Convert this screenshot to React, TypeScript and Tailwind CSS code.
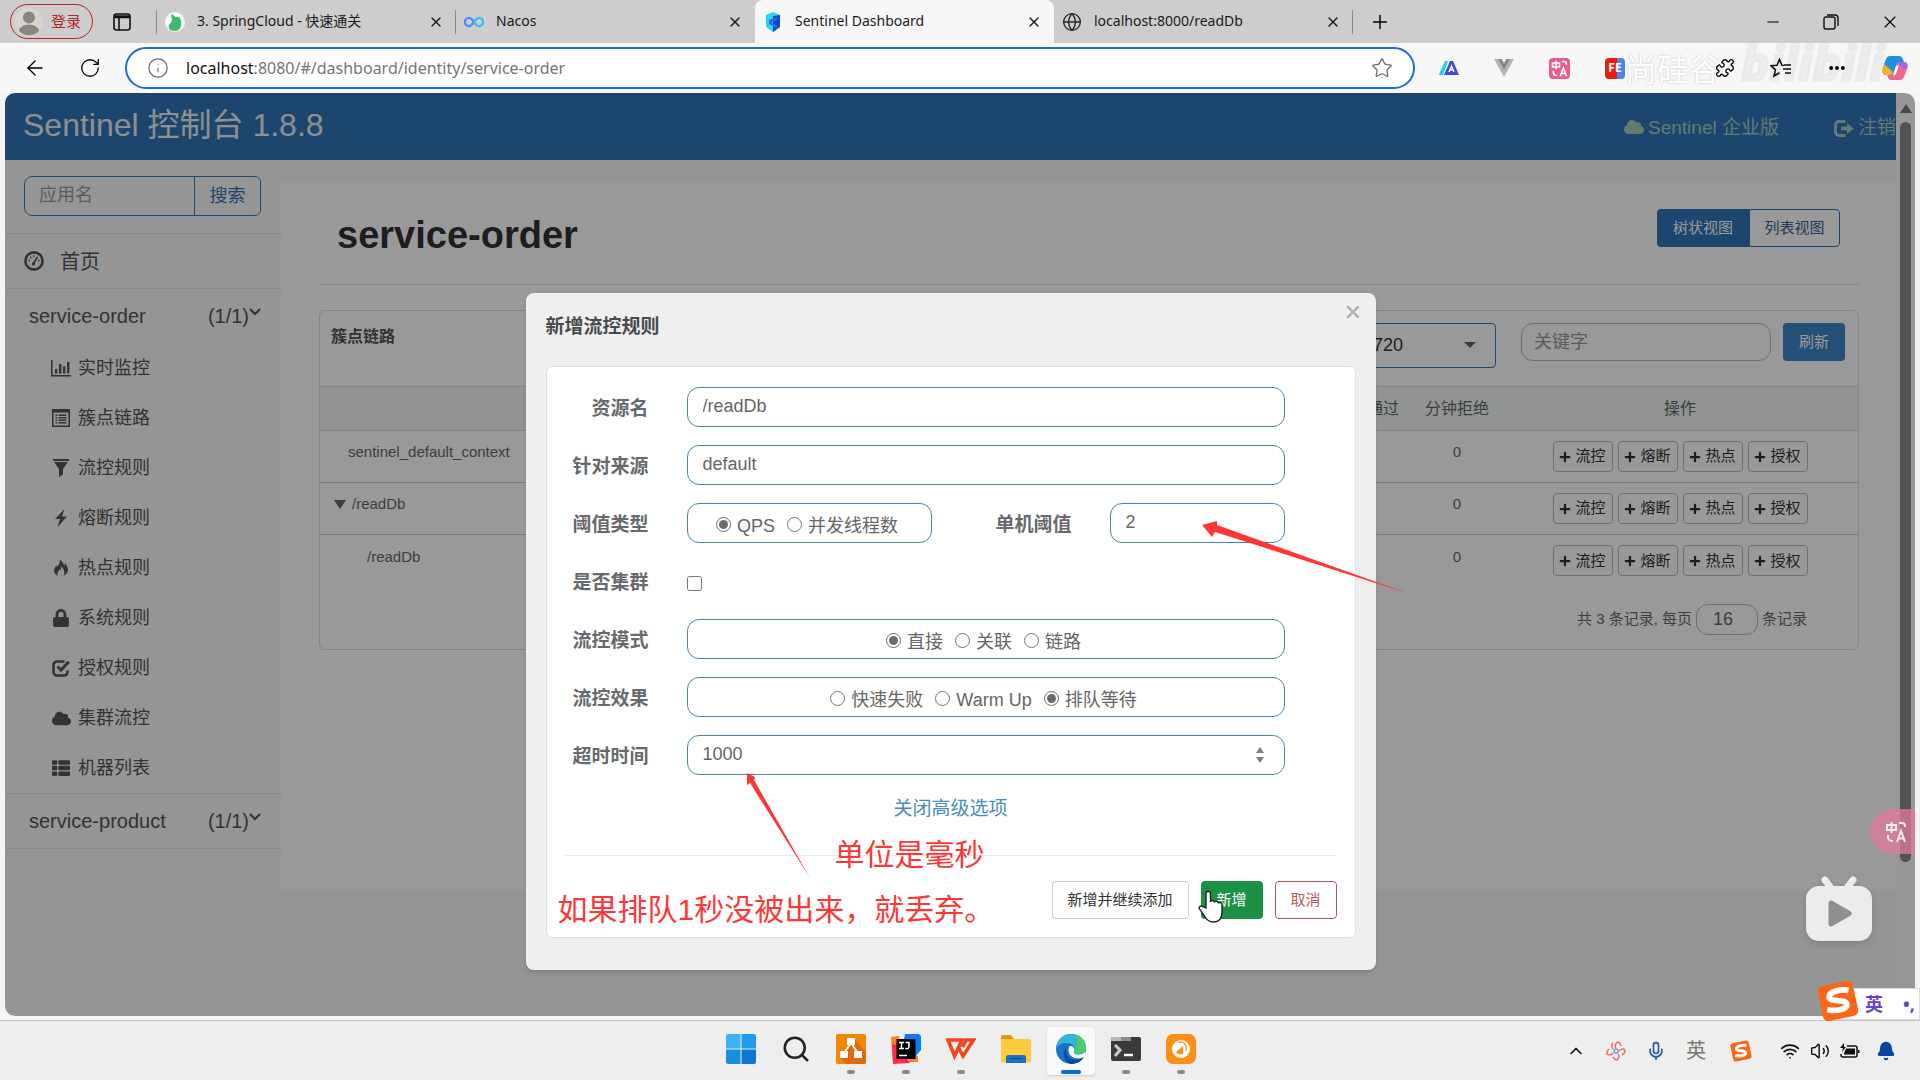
import type { ReactNode } from 'react';
import {
  ArrowLeft,
  Bell,
  ChevronUp,
  Ellipsis,
  Globe,
  Info,
  Mic,
  Minus,
  Plus,
  Puzzle,
  RotateCw,
  Search,
  Star,
  Volume2,
  Wifi,
  X,
} from 'lucide-react';
import { FaCloud, FaLock, FaPlus, FaThList } from 'react-icons/fa';
import { ImFire } from 'react-icons/im';

const UI_FONT = 'font-["Noto_Sans","Noto_Sans_CJK_SC",sans-serif]';
const PAGE_FONT = 'font-["Liberation_Sans","Noto_Sans_CJK_SC",sans-serif]';

/* ---------- icons ---------- */

function StatsIcon() {
  return (
    <svg viewBox="0 0 20 17" className="w-5 h-[17px]" fill="currentColor">
      <path d="M0 0h1.5v15H20v1.5H0zM4 9h2.4v4.5H4zM8 4h2.4v9.500H8zM12 6.500h2.400v7H12zM16 2h2.400v11.500H16z" />
    </svg>
  );
}

function ListAltIcon() {
  return (
    <svg viewBox="0 0 18 18" className="w-[18px] h-[18px]" fill="currentColor" fillRule="evenodd">
      <path d="M0 0h18v18H0zM1.500 3.500v13h15v-13z" />
      <path d="M3.500 5.500h1.800v1.500H3.500zM6.500 5.500h8v1.500h-8zM3.500 8h1.800v1.500H3.500zM6.500 8h8v1.500h-8zM3.500 10.500h1.800V12H3.500zM6.500 10.500h8V12h-8zM3.500 13h1.800v1.500H3.500zM6.500 13h8v1.500h-8z" />
    </svg>
  );
}

function FilterIcon() {
  return (
    <svg viewBox="0 0 16 18" className="w-4 h-[18px]" fill="currentColor">
      <path d="M0 0h16v2H0zM1 3h14l-5 7v5.500L6 18v-8z" />
    </svg>
  );
}

function FlashIcon() {
  return (
    <svg viewBox="0 0 12 18" className="w-3 h-[18px]" fill="currentColor">
      <path d="M9.500 0L0 10h5L2.500 18 12 7.500H7z" />
    </svg>
  );
}

function LockIcon() {
  return <FaLock className="w-[18px] h-[18px]" />;
}

function CheckIcon() {
  return (
    <svg viewBox="0 0 18 17" className="w-[18px] h-[17px]" fill="none" stroke="currentColor">
      <path d="M12.500 1.500H5A3.500 3.500 0 001.500 5v7A3.500 3.500 0 005 15.500h7A3.500 3.500 0 0015.500 12v-1.500" strokeWidth="2.600" />
      <path d="M5.500 6.500l3.500 3.500L16.800 1.800" strokeWidth="3" />
    </svg>
  );
}

function MeterIcon() {
  return (
    <svg viewBox="0 0 20 20" className="w-5 h-5" fill="none" stroke="currentColor">
      <circle cx="10" cy="10" r="8.600" strokeWidth="2.600" />
      <path d="M9.500 12.500l4-6.500" strokeWidth="1.600" />
      <circle cx="9.500" cy="13" r="1.200" fill="currentColor" />
      <path d="M4.500 9.500h1.500M6 6.500h1.500M9 5h1.500M14 9.500h1.500" strokeWidth="1.500" />
    </svg>
  );
}

function LogoutIcon() {
  return (
    <svg viewBox="0 0 20 17" className="w-5 h-[17px]" fill="none" stroke="currentColor">
      <path d="M11.500 1.500H5A3.500 3.500 0 001.500 5v7A3.500 3.500 0 005 15.500h6.500" strokeWidth="3" />
      <path d="M7 6.500h6V3l7 5.500-7 5.500v-3.500H7z" fill="currentColor" stroke="none" />
    </svg>
  );
}

function TranslateGlyph({ className }: { className: string }) {
  return (
    <svg viewBox="0 0 22 22" className={className} fill="none" stroke="currentColor" strokeWidth="2">
      <path d="M2 4h9v5H2zM6.500 1v11M14 2h3a3 3 0 013 3v1M3 14v2a4 4 0 004 4h1" />
      <path d="M12 21l4-11 4 11M13.500 17.500h5" />
    </svg>
  );
}

function SogouIcon({ className }: { className: string }) {
  return (
    <svg viewBox="0 0 40 40" className={className}>
      <rect x="3" y="3" width="34" height="34" rx="5" fill="#fb6617" transform="rotate(-12 20 20)" />
      <path
        d="M31 11c-7-2-19-1-19 4.500 0 5 16 3 16 8.500 0 5-11 6-19 3"
        fill="none"
        stroke="#fff"
        strokeWidth="5.500"
        transform="rotate(-6 20 20)"
      />
    </svg>
  );
}

/* ---------- browser chrome ---------- */

function TabItem({ icon, title, active = false, divider = false }: {
  icon: ReactNode;
  title: string;
  active?: boolean;
  divider?: boolean;
}) {
  return (
    <div
      className={`relative flex items-center w-[299px] h-[43px] pl-2 pr-3 ${active ? 'bg-[#f7f7f7] rounded-t-lg' : ''}`}
    >
      <span className="w-5 h-5 flex items-center justify-center shrink-0">{icon}</span>
      <span className="flex-1 pl-3 pb-[2px] text-[14px] leading-5 text-[#1a1a1a] truncate">{title}</span>
      <button aria-label="关闭标签页" className="text-[#1a1a1a]">
        <X className="w-4 h-4" strokeWidth={2} />
      </button>
      {divider && <span className="absolute right-0 top-[10px] w-px h-6 bg-[#8c8c8c]" />}
    </div>
  );
}

function TabBar() {
  return (
    <div className="flex items-center h-[43px] bg-[#cdcdcd] shrink-0">
      <button className="flex items-center gap-2 w-[83px] h-[35px] ml-[10px] pl-1 rounded-full border border-[#b3262b] text-[#b3262b] text-[15px]">
        <svg viewBox="0 0 28 28" className="w-7 h-7">
          <circle cx="14" cy="14" r="14" fill="#d8d4d0" />
          <circle cx="14" cy="9.500" r="6" fill="#8b8682" />
          <path d="M4 23a10 6.500 0 0120 0 14 14 0 01-20 0z" fill="#8b8682" />
        </svg>
        登录
      </button>
      <button aria-label="标签操作" className="w-[18px] h-[18px] ml-5 mr-[25px]">
        <svg viewBox="0 0 18 18" fill="none" stroke="#111" strokeWidth="1.600">
          <rect x="1" y="1" width="16" height="16" rx="2.500" />
          <path d="M1 3h16M1 4.500h16M6 5v12" />
        </svg>
      </button>
      <span className="w-px h-6 bg-[#8c8c8c]" />
      <TabItem
        divider
        title="3. SpringCloud - 快速通关"
        icon={
          <svg viewBox="0 0 20 20" className="w-5 h-5">
            <circle cx="10" cy="10" r="10" fill="#f3fbf6" />
            <path d="M7 2c2 1 2 3 5 3s4 2 4 5c1 5-2 9-6 9-5 0-7-3-6-6 1-2 3-3 3-6-1-2-1-4 0-5z" fill="#3dba6f" />
          </svg>
        }
      />
      <TabItem
        title="Nacos"
        icon={
          <svg viewBox="0 0 22 12" className="w-[22px] h-3" fill="none" strokeWidth="2.400">
            <path d="M11 6C8.500 2.500 7 1.500 5.500 1.500a4.500 4.500 0 000 9C7 10.500 8.500 9.500 11 6" stroke="#4f8df5" />
            <path d="M11 6c2.500-3.500 4-4.500 5.500-4.500a4.500 4.500 0 010 9C15 10.500 13.500 9.500 11 6" stroke="#2cc4f0" />
          </svg>
        }
      />
      <TabItem
        active
        title="Sentinel Dashboard"
        icon={
          <svg viewBox="0 0 16 20" className="w-4 h-5">
            <path d="M1 3l7-3 7 3v12l-7 5-7-5z" fill="#2bd5ee" />
            <path d="M8 4l7-1v12l-7 5z" fill="#1546c4" />
            <path d="M4 8l8-3v3L6 11l6 2v3l-8-4z" fill="#1e6fe0" />
          </svg>
        }
      />
      <TabItem divider title="localhost:8000/readDb" icon={<Globe className="w-5 h-5 text-[#222]" strokeWidth={1.600} />} />
      <button aria-label="新建标签页" className="ml-4">
        <Plus className="w-[22px] h-[22px]" strokeWidth={1.600} />
      </button>
      <div className="flex items-center gap-10 ml-auto pr-5">
        <button aria-label="最小化"><Minus className="w-[18px] h-[18px]" strokeWidth={1.400} /></button>
        <button aria-label="还原">
          <svg viewBox="0 0 18 18" className="w-[18px] h-[18px]" fill="none" stroke="#111" strokeWidth="1.400">
            <rect x="2" y="4" width="11" height="12" rx="2" />
            <path d="M5 2h8a3 3 0 013 3v8" />
          </svg>
        </button>
        <button aria-label="关闭"><X className="w-5 h-5" strokeWidth={1.300} /></button>
      </div>
    </div>
  );
}

function AddressBar() {
  return (
    <div className="relative flex items-center h-[50px] bg-[#f7f7f7] shrink-0">
      <button aria-label="后退" className="ml-[23px]"><ArrowLeft className="w-6 h-6" strokeWidth={1.400} /></button>
      <button aria-label="刷新" className="ml-8 mr-6"><RotateCw className="w-[22px] h-[22px]" strokeWidth={1.400} /></button>
      <div className="flex items-center flex-1 h-[42px] px-5 rounded-full border-2 border-[#1f6bd6] bg-white">
        <Info className="w-[22px] h-[22px] text-[#6b6b6b]" strokeWidth={1.300} />
        <span className="flex-1 pl-[17px] text-[16px] text-[#767676]">
          <span className="text-[#111]">localhost</span>:8080/#/dashboard/identity/service-order
        </span>
        <Star className="w-[22px] h-[22px] text-[#6b6b6b]" strokeWidth={1.400} />
      </div>

      <div className="absolute right-9 -top-2 flex items-center gap-5 text-white pointer-events-none select-none">
        <span className="pt-3 text-[32px] leading-10 [text-shadow:0_0_2px_#bbb]">尚硅谷</span>
        <span className="text-[48px] leading-[56px] font-bold italic text-[#ececec] [text-shadow:0_0_2px_#ccc]">bilibili</span>
      </div>

      <div className="relative flex items-center justify-between w-[505px] pl-6 pr-3">
        <svg viewBox="0 0 20 14" className="w-5 h-[14px]">
          <path d="M6 0h3l-5 14H1a1 1 0 01-1-1z" fill="#27d0e8" />
          <path d="M11 0h3l6 14H5z" fill="#3a49e0" />
          <path d="M10 11l2.500-6 2.500 6M11 9h3" stroke="#fff" fill="none" strokeWidth="1.500" />
        </svg>
        <svg viewBox="0 0 20 18" className="w-5 h-[18px]">
          <path d="M0 0h6l4 7 4-7h6L10 18z" fill="#b5b5b5" />
          <path d="M4 0h3.500L10 4.500 12.500 0H16l-6 10.500z" fill="#858585" />
        </svg>
        <span className="w-[21px] h-[21px] rounded-sm bg-[#e85d8b] text-white flex items-center justify-center">
          <TranslateGlyph className="w-[17px] h-[17px]" />
        </span>
        <span className="w-5 h-[21px] rounded-sm bg-linear-to-r from-[#ee1c0c] from-60% to-[#4b83ef] to-60% text-white text-[12px] font-bold flex items-center justify-center">
          FE
        </span>
        <span className="w-5" />
        <Puzzle className="w-5 h-5" strokeWidth={1.600} />
        <svg viewBox="0 0 22 20" className="w-[22px] h-5" fill="none" stroke="#111" strokeWidth="1.600">
          <path d="M14 7.500l-2-.3L9.500 1.500 7 7.200l-6 .6 4.500 4L4 18l5.500-3.200M14 7h7M13 11h8M15 15h6" />
        </svg>
        <Ellipsis className="w-5 h-5" strokeWidth={2.600} />
        <svg viewBox="0 0 26 26" className="w-[26px] h-[26px]">
          <path d="M8 1h9c3 0 4 3 5 6h-4c-2 0-3 1-4 4l-2 6c-1 2-2 3-4 3H4C0 20 0 16 1 12l3-8c1-2 2-3 4-3z" fill="#1f8fe0" />
          <path d="M1 12l1-3 9 8c-1 2-2 3-4 3H4c-4 0-4-4-3-8z" fill="#f4b526" />
          <path d="M18 7h4c4 0 4 4 3 7l-3 8c-1 2-2 3-4 3H9c-2 0-3-2-4-5h3c2 0 3-1 4-3l2-6c1-3 2-4 4-4z" fill="#f0688f" />
          <path d="M18 7h4c4 0 4 4 3 7h-3l-4-3-3 2h-1c1-4 2-6 4-6z" fill="#a566e8" />
          <path d="M14 11l3-1-3 9-3 2z" fill="#fff" />
        </svg>
      </div>
    </div>
  );
}

/* ---------- sentinel page ---------- */

const menuItems: { label: string; icon: ReactNode }[] = [
  { label: '实时监控', icon: <StatsIcon /> },
  { label: '簇点链路', icon: <ListAltIcon /> },
  { label: '流控规则', icon: <FilterIcon /> },
  { label: '熔断规则', icon: <FlashIcon /> },
  { label: '热点规则', icon: <ImFire className="w-4 h-[18px]" /> },
  { label: '系统规则', icon: <LockIcon /> },
  { label: '授权规则', icon: <CheckIcon /> },
  { label: '集群流控', icon: <FaCloud className="w-[19px] h-[17px]" /> },
  { label: '机器列表', icon: <FaThList className="w-[18px] h-[18px]" /> },
];

const rows = [
  { name: 'sentinel_default_context', pad: 'pl-7', open: false },
  { name: '/readDb', pad: 'pl-[14px]', open: true },
  { name: '/readDb', pad: 'pl-[47px]', open: false },
];

const actions = ['流控', '熔断', '热点', '授权'];

function AppHeading({ name }: { name: string }) {
  return (
    <a href="#" className="flex items-center h-[54px] pl-6 pr-5 text-[20px] text-[#555]">
      <span className="flex-1">{name}</span>
      <span>(1/1)</span>
      <svg viewBox="0 0 12 8" className="w-3 h-2 mb-2" fill="none" stroke="currentColor" strokeWidth="2">
        <path d="M1 1l5 5 5-5" />
      </svg>
    </a>
  );
}

function Sidebar() {
  return (
    <nav className="w-[276px] shrink-0 bg-[#f8f8f8] h-[730px]">
      <form className="flex h-[74px] pt-4 pl-[19px] pr-5 border-b border-[#e7e7e7]">
        <input
          aria-label="应用名"
          placeholder="应用名"
          className="w-[171px] h-10 pl-[14px] pb-[2px] text-[18px] border border-[#3a7cb8] rounded-l-lg placeholder:text-[#999]"
        />
        <button type="button" className="flex-1 h-10 -ml-px border border-[#3a7cb8] rounded-r-md text-[18px] text-[#3377b5]">
          搜索
        </button>
      </form>
      <a href="#" className="flex items-center gap-4 h-[55px] pl-[19px] border-b border-[#e7e7e7] text-[20px] text-[#555]">
        <MeterIcon />
        <span className="pt-[2px]">首页</span>
      </a>
      <AppHeading name="service-order" />
      <ul className="border-b border-[#e7e7e7]">
        {menuItems.map((m) => (
          <li key={m.label}>
            <a href="#" className="flex items-center h-[50px] pl-[46px] gap-[7px] text-[18px] text-[#555]">
              <span className="w-5 flex justify-center">{m.icon}</span>
              {m.label}
            </a>
          </li>
        ))}
      </ul>
      <div className="border-b border-[#e7e7e7]">
        <AppHeading name="service-product" />
      </div>
    </nav>
  );
}

function LinkCard() {
  return (
    <section className="mt-[25px] border border-[#ddd] rounded-md text-[#676a6c]">
      <div className="flex items-start h-[75px] pl-[11px] pr-[13px] pt-3">
        <h2 className="flex-1 pt-[2px] text-[16px] font-bold text-[#555]">簇点链路</h2>
        <div className="relative mr-[25px]">
          <select
            aria-label="机器"
            className="appearance-none w-[300px] h-[45px] pr-[92px] text-right text-[18px] text-[#333] border border-[#3a7cb8] rounded"
          >
            <option>8720</option>
          </select>
          <span className="absolute right-5 top-[19px] border-x-6 border-x-transparent border-t-6 border-t-[#666]" />
        </div>
        <input
          aria-label="关键字"
          placeholder="关键字"
          className="w-[250px] h-[38px] mr-3 pl-3 text-[18px] border border-[#bbb] rounded-xl placeholder:text-[#999]"
        />
        <button className="w-[62px] h-[38px] rounded bg-[#3c84c6] text-white text-[15px]">刷新</button>
      </div>
      <table className="w-full table-fixed border-collapse text-[15px]">
        <thead>
          <tr className="h-[44px] border-y border-[#dcdfe0] bg-[#f2f7f6] text-[16px]">
            <th />
            {['通过QPS', '拒绝QPS', '并发数', '平均RT', '分钟通过', '分钟拒绝'].map((h) => (
              <th key={h} className="w-[90px] font-normal">{h}</th>
            ))}
            <th className="w-[356px] font-normal">操作</th>
          </tr>
        </thead>
        <tbody>
          {rows.map((r, i) => (
            <tr key={i} className="h-[52px] border-t border-[#d0d0d0]">
              <td className={r.pad}>
                <span className="flex items-center gap-[6px] pb-2">
                  {r.open && <span className="border-x-6 border-x-transparent border-t-9 border-t-[#666]" />}
                  {r.name}
                </span>
              </td>
              {[0, 0, 0, 0, 0, 0].map((n, c) => (
                <td key={c} className="pb-2 text-center">{n}</td>
              ))}
              <td>
                <div className="flex justify-center gap-[5px]">
                  {actions.map((a) => (
                    <button key={a} className="flex items-center justify-center gap-1 w-[60px] h-[31px] border border-[#bbb] rounded text-[15px] text-[#333]">
                      <FaPlus className="w-3 h-3" />
                      {a}
                    </button>
                  ))}
                </div>
              </td>
            </tr>
          ))}
        </tbody>
      </table>
      <div className="flex justify-end items-center gap-1 h-[62px] pr-[51px] pt-1 text-[15px]">
        <label htmlFor="pageSize">共 3 条记录, 每页</label>
        <input id="pageSize" defaultValue="16" className="w-[62px] h-[31px] pl-4 text-[18px] border border-[#bbb] rounded-xl" />
        <span>条记录</span>
      </div>
    </section>
  );
}

function Page() {
  return (
    <div className="flex-1 min-w-0 bg-[#f8f8f8]">
      <header className="flex items-center h-[67px] pl-[18px] bg-[#2f75b6]">
        <h1 className="flex-1 pb-1 text-[32px] text-[#eee]">Sentinel 控制台 1.8.8</h1>
        <a href="#" className="flex items-center gap-1 pt-1 text-[19px] text-[#a5cbbd]">
          <FaCloud className="w-5 h-5 mb-1" />
          Sentinel 企业版
        </a>
        <a href="#" className="flex items-center gap-1 ml-[55px] pt-1 text-[19px] text-[#a5cbbd]">
          <LogoutIcon />
          注销
        </a>
      </header>
      <div className="flex items-start">
        <Sidebar />
        <main className="flex-1 min-w-0 h-[708px] mt-[22px] pl-[38px] pr-[37px] bg-white">
          <div className="flex items-start justify-between h-[103px] pt-[27px] pl-[18px] pr-[19px] border-b border-[#ddd]">
            <h2 className="text-[38px] leading-[52px] font-bold text-[#333]">service-order</h2>
            <div className="flex text-[15px]">
              <button className="w-[92px] h-[38px] rounded-l bg-[#2f75b6] text-white">树状视图</button>
              <button className="w-[91px] h-[38px] rounded-r border border-[#2f75b6] text-[#3a5f96]">列表视图</button>
            </div>
          </div>
          <LinkCard />
        </main>
      </div>
    </div>
  );
}

/* ---------- dialog ---------- */

const boxClass = 'h-10 border border-[#4a83a8] rounded-xl text-[18px] text-[#666] bg-white';

function Field({ label, htmlFor, children }: { label: string; htmlFor?: string; children: ReactNode }) {
  return (
    <div className="flex items-center h-10">
      <label htmlFor={htmlFor} className="w-[84px] mr-[38px] pt-1 text-right text-[19px] font-bold text-[#676a6c]">
        {label}
      </label>
      {children}
    </div>
  );
}

function RadioGroup({ name, options, checked, className }: {
  name: string;
  options: string[];
  checked: string;
  className: string;
}) {
  return (
    <div role="radiogroup" aria-label={name} className={`${boxClass} ${className} flex items-center justify-center gap-3 pr-1`}>
      {options.map((o) => (
        <label key={o} className="flex items-center gap-[6px] pt-[6px]">
          <input type="radio" name={name} defaultChecked={o === checked} className="w-[15px] h-[15px] mb-1 accent-[#6b6b6b]" />
          {o}
        </label>
      ))}
    </div>
  );
}

function RuleDialog() {
  return (
    <div role="dialog" aria-label="新增流控规则" className="relative w-[850px] px-5 pb-8 bg-[#efefef] rounded-lg shadow-md">
      <button aria-label="关闭" className="absolute right-[13px] top-[9px] text-[#b5b5b5]">
        <X className="w-5 h-5" strokeWidth={3.200} />
      </button>
      <h3 className="h-[73px] pt-5 text-[19px] leading-7 font-bold text-[#484b4e]">新增流控规则</h3>

      <div className="pt-5 px-[18px] pb-[18px] bg-white border border-[#e0e0e0] rounded-md">
        <form className="flex flex-col gap-[18px]">
          <Field label="资源名" htmlFor="resource">
            <input id="resource" defaultValue="/readDb" className={`${boxClass} w-[598px] px-[15px] pb-[2px]`} />
          </Field>
          <Field label="针对来源" htmlFor="origin">
            <input id="origin" defaultValue="default" className={`${boxClass} w-[598px] px-[15px] pb-[2px]`} />
          </Field>
          <Field label="阈值类型">
            <RadioGroup name="阈值类型" options={['QPS', '并发线程数']} checked="QPS" className="w-[245px]" />
            <label htmlFor="count" className="ml-16 mr-[38px] pt-1 text-[19px] font-bold text-[#676a6c]">单机阈值</label>
            <input id="count" defaultValue="2" className={`${boxClass} w-[175px] px-[15px] pb-[2px]`} />
          </Field>
          <Field label="是否集群" htmlFor="cluster">
            <input id="cluster" type="checkbox" className="w-[15px] h-[15px] mt-1" />
          </Field>
          <Field label="流控模式">
            <RadioGroup name="流控模式" options={['直接', '关联', '链路']} checked="直接" className="w-[598px]" />
          </Field>
          <Field label="流控效果">
            <RadioGroup name="流控效果" options={['快速失败', 'Warm Up', '排队等待']} checked="排队等待" className="w-[598px]" />
          </Field>
          <Field label="超时时间" htmlFor="timeout">
            <div className="relative">
              <input id="timeout" defaultValue="1000" className={`${boxClass} w-[598px] px-[15px] pb-[2px]`} />
              <svg viewBox="0 0 8 16" className="absolute right-[21px] top-3 w-2 h-4" fill="#7d7d7d">
                <path d="M4 0l4 6H0zM4 16l4-6H0z" />
              </svg>
            </div>
          </Field>
        </form>
        <div className="h-[81px] pt-5 text-center border-b border-[#ebebeb]">
          <a href="#" className="text-[19px] leading-7 text-[#4a8bc0]">关闭高级选项</a>
        </div>
        <div className="flex justify-end gap-3 pt-[25px] text-[15px]">
          <button className="w-[137px] h-[38px] border border-[#ccc] rounded text-[#333]">新增并继续添加</button>
          <button className="w-[62px] h-[38px] rounded bg-[#1c9144] text-white">新增</button>
          <button className="w-[62px] h-[38px] border border-[#b5545a] rounded text-[#c0565c]">取消</button>
        </div>
      </div>

      {/* hand-drawn notes over the form */}
      <p className="absolute left-[309px] top-[540px] text-[30px] leading-[44px] text-[#ff3636] whitespace-nowrap">单位是毫秒</p>
      <p className="absolute left-8 top-[595px] text-[30px] leading-[44px] text-[#ff3636] whitespace-nowrap">
        如果排队1秒没被出来，就丢弃。
      </p>
      <svg viewBox="0 0 900 677" className="absolute left-0 top-0 w-[900px] h-[677px] pointer-events-none" fill="#ff3636">
        <path d="M676 232l15-4v4l193 69-195-62-3 5z" />
        <path d="M221 480l8 4-1 3 56 98-60-95-3 2z" />
      </svg>
      <svg viewBox="0 0 26 34" className="absolute left-[672px] top-[597px] w-[26px] h-[34px]" fill="#fff" stroke="#222" strokeWidth="1.400">
        <path d="M8 18V3.500a2.200 2.200 0 014.500 0V12c0-2 4-2 4 .5 0-2 4-1.500 4 1 0-1.500 3.500-1.500 3.500 1V22c0 7-3 10-8.500 10-5 0-7-2-9-6l-5-7c-1-2 1-4 3-2.500z" />
      </svg>
    </div>
  );
}

function Scrollbar() {
  return (
    <div className="flex flex-col items-center w-[19px] shrink-0 bg-[#fcfcfc] pt-[11px]">
      <span className="border-x-6 border-x-transparent border-b-9 border-b-[#777]" />
      <span className="w-[11px] h-[740px] mt-[9px] rounded-full bg-[#8b8b8b]" />
    </div>
  );
}

/* ---------- taskbar ---------- */

const taskIcons: { name: string; state: 'none' | 'open' | 'active'; icon: ReactNode }[] = [
  {
    name: '开始',
    state: 'none',
    icon: (
      <svg viewBox="0 0 30 30" className="w-[30px] h-[30px]" fill="#1590e0">
        <path d="M2 0h12.500v14.500H0V2a2 2 0 012-2z" fill="#3bb4f5" />
        <path d="M15.500 0H28a2 2 0 012 2v12.500H15.500z" fill="#1f9cec" />
        <path d="M0 15.500h14.500V30H2a2 2 0 01-2-2z" />
        <path d="M15.500 15.500H30V28a2 2 0 01-2 2H15.500z" fill="#0a78d4" />
      </svg>
    ),
  },
  { name: '搜索', state: 'none', icon: <Search className="w-[30px] h-[30px] text-[#222]" strokeWidth={2} /> },
  {
    name: 'draw.io',
    state: 'open',
    icon: (
      <svg viewBox="0 0 30 30" className="w-[30px] h-[30px]">
        <rect width="30" height="30" rx="2" fill="#f08705" />
        <path d="M18 5l12 13v10a2 2 0 01-2 2H10l-5-6z" fill="#df6c0c" />
        <path d="M15 9L8 19M15 9l7 10" stroke="#fff" strokeWidth="1.800" />
        <path d="M11 4h8v7h-8zM4 17h8v7H4zM18 17h8v7h-8z" fill="#fff" />
      </svg>
    ),
  },
  {
    name: 'IntelliJ IDEA',
    state: 'open',
    icon: (
      <svg viewBox="0 0 30 30" className="w-[30px] h-[30px]">
        <path d="M0 3l8-1 4 20-10 8z" fill="#fc801d" />
        <path d="M1 10l8 2 10 17-17 1z" fill="#fe2857" />
        <path d="M14 0h14l2 2v14l-6 7-12-12z" fill="#087cfa" />
        <path d="M18 22h9v6h-9z" fill="#fc801d" />
        <rect x="5.500" y="5" width="19" height="20" fill="#000" />
        <path d="M8 8.500h5M10.500 8.500v6M8 14.500h5M14.500 8.500h3.500v4.500a2 2 0 01-3.500 1M8 21.500h8" stroke="#fff" strokeWidth="1.500" fill="none" />
      </svg>
    ),
  },
  {
    name: 'WPS',
    state: 'open',
    icon: (
      <svg viewBox="0 0 30 22" className="w-[30px] h-[22px]" fill="none" strokeWidth="3.600">
        <path d="M2 2h14L8.500 18z" stroke="#f4431f" />
        <path d="M12 9l5 9 10.500-16H20l-3.500 7" stroke="#f4431f" />
      </svg>
    ),
  },
  {
    name: '文件资源管理器',
    state: 'none',
    icon: (
      <svg viewBox="0 0 30 28" className="w-[30px] h-7">
        <path d="M0 2a2 2 0 012-2h8l3 4H0z" fill="#e09c10" />
        <path d="M0 4h28a2 2 0 012 2v20a1.500 1.500 0 01-1.500 1.500h-27A1.500 1.500 0 010 26z" fill="#ffcb3d" />
        <path d="M5 28v-6a2 2 0 012-2h16a2 2 0 012 2v6z" fill="#1771c6" />
        <path d="M9 23.500h12" stroke="#0a4f96" strokeWidth="1.200" />
      </svg>
    ),
  },
  {
    name: 'Microsoft Edge',
    state: 'active',
    icon: (
      <svg viewBox="0 0 30 30" className="w-[30px] h-[30px]">
        <circle cx="15" cy="15" r="15" fill="#1673c7" />
        <path d="M0 14C1 5 8 0 15 0c9 0 15 6 15 13 0 5-4 7-8 7-3 0-5-1-4-3 2-3-1-8-7-8-5 0-9 2-11 5z" fill="#2fb5d8" />
        <path d="M20 1c6 2 10 7 10 12 0 5-4 7-8 7-3 0-5-1-4-3 3-5 4-10 2-16z" fill="#4ccb6a" />
        <path d="M11 13c-3 6 1 13 9 13 3 0 6-1 8-3-3 5-8 7-13 7-7-2-10-11-4-17z" fill="#0c4a9c" />
        <path d="M14 12c3 0 5 2 4 5-1 2 1 3.500 4 3.500 3 0 6-1 7.500-3.500l-.5 5c-4 4-14 3-16-3-1-3-.500-6 1-7z" fill="#f4f8fc" />
      </svg>
    ),
  },
  {
    name: '终端',
    state: 'open',
    icon: (
      <svg viewBox="0 0 30 24" className="w-[30px] h-6">
        <rect width="30" height="24" rx="2" fill="#3a3a3a" />
        <path d="M2 0h8v4H0V2a2 2 0 012-2z" fill="#b9b9b9" />
        <path d="M10 0h10v4H10z" fill="#8b8b8b" />
        <path d="M4 8l5 5-5 6" stroke="#ccc" strokeWidth="3" fill="none" />
        <path d="M13 18h9" stroke="#fff" strokeWidth="2.500" />
      </svg>
    ),
  },
  {
    name: '录屏',
    state: 'open',
    icon: (
      <svg viewBox="0 0 30 30" className="w-[30px] h-[30px]">
        <rect width="30" height="30" rx="7" fill="#fc8f17" />
        <circle cx="15" cy="15" r="9" fill="#fff" />
        <path d="M10 18l7-6v8c-3 1-6 0-7-2z" fill="#fc8f17" />
        <path d="M12 9c5-3 9 1 8 8" stroke="#fc8f17" strokeWidth="1.200" fill="none" />
      </svg>
    ),
  },
];

const dotClass = {
  none: 'w-2 h-1',
  open: 'w-2 h-1 rounded-full bg-[#8a8a8a]',
  active: 'w-5 h-1 rounded-full bg-[#0a6ccf]',
};

function Taskbar() {
  return (
    <footer className="relative flex items-center justify-center h-[60px] pl-[2px] shrink-0 bg-[#eeeeee] border-t border-[#c4c4c4]">
      <div className="flex gap-[7px]">
        {taskIcons.map((t) => (
          <button
            key={t.name}
            aria-label={t.name}
            className={`flex flex-col items-center w-12 h-12 pt-px pb-px rounded ${t.state === 'active' ? 'bg-[#f9f9f9] shadow-sm' : ''}`}
          >
            <span className="flex flex-1 items-center justify-center">{t.icon}</span>
            <span className={dotClass[t.state]} />
          </button>
        ))}
      </div>
      <div className="absolute right-6 top-0 h-full flex items-center gap-5 text-[#111]">
        <ChevronUp className="w-5 h-5" strokeWidth={2} />
        <svg viewBox="0 0 20 20" className="w-5 h-5" fill="none" stroke="#e5706b" strokeWidth="1.500">
          <path d="M10 7a4 4 0 012-6 5 5 0 013 4M13 10a4 4 0 016-1 5 5 0 01-3 5M12 13a4 4 0 01-1 6 5 5 0 01-4-3M7 12a4 4 0 01-6 1 5 5 0 012-5M7 8a4 4 0 010-6" />
          <circle cx="10" cy="10" r="2" stroke="#7d9be0" />
        </svg>
        <Mic className="w-5 h-5 text-[#2356a5]" strokeWidth={2} />
        <span className="w-5 text-[20px] leading-6 text-[#777]">英</span>
        <SogouIcon className="w-[22px] h-[22px] mx-1" />
        <div className="flex items-center gap-[10px] pl-1">
          <Wifi className="w-5 h-5" strokeWidth={2} />
          <Volume2 className="w-5 h-5" strokeWidth={1.700} />
          <svg viewBox="0 0 20 16" className="w-5 h-4" fill="none" stroke="#111" strokeWidth="1.500">
            <path d="M7 3h8a2 2 0 012 2v7a2 2 0 01-2 2H3a2 2 0 01-2-2v-1" />
            <path d="M6 5.500h9v6H3.500zM18 7h1.500v3H18zM4 0L0 5h3L2 9l4-5H4z" fill="#111" stroke="none" />
          </svg>
        </div>
        <Bell className="w-5 h-5 -ml-1 text-[#0a43a0] fill-[#0a43a0]" strokeWidth={2} />
      </div>
    </footer>
  );
}

export default function App() {
  return (
    <div className={`relative flex flex-col h-screen overflow-hidden bg-[#f5f5f5] ${UI_FONT}`}>
      <TabBar />
      <AddressBar />
      <div className="flex-1 min-h-0 px-[5px] pb-1">
        <div className={`relative flex h-full rounded-[10px] overflow-hidden ${PAGE_FONT}`}>
          <Page />
          <Scrollbar />
          <div className="absolute inset-0 flex justify-center items-start pt-[200px] pr-[19px] bg-black/40">
            <RuleDialog />
          </div>
          <button
            aria-label="翻译"
            className="absolute right-0 top-[716px] flex items-center w-[45px] h-[45px] pl-[15px] rounded-l-full bg-[#e27a9b]/75 text-[#eee]"
          >
            <TranslateGlyph className="w-[22px] h-[22px]" />
          </button>
          <svg viewBox="0 0 68 66" className="absolute right-[42px] top-[783px] w-[68px] h-[66px] drop-shadow-md">
            <path d="M20 4l6 8M48 4l-6 8" stroke="#ececec" strokeWidth="7" strokeLinecap="round" />
            <rect x="1" y="10" width="66" height="55" rx="13" fill="#ececec" />
            <path d="M26 27v21l18-10.500z" fill="#8f8f8f" stroke="#8f8f8f" strokeWidth="5" strokeLinejoin="round" />
          </svg>
        </div>
      </div>
      <Taskbar />
      <div className="absolute right-0 bottom-[60px] flex items-center h-8 w-[82px] pl-[26px] bg-white border border-[#ddd] text-[18px] font-bold text-[#6742c4]">
        <SogouIcon className="absolute -left-[22px] -top-[9px] w-[42px] h-[42px]" />
        <span className="flex-1">英</span>
        <span className="pr-1">•,</span>
      </div>
    </div>
  );
}
